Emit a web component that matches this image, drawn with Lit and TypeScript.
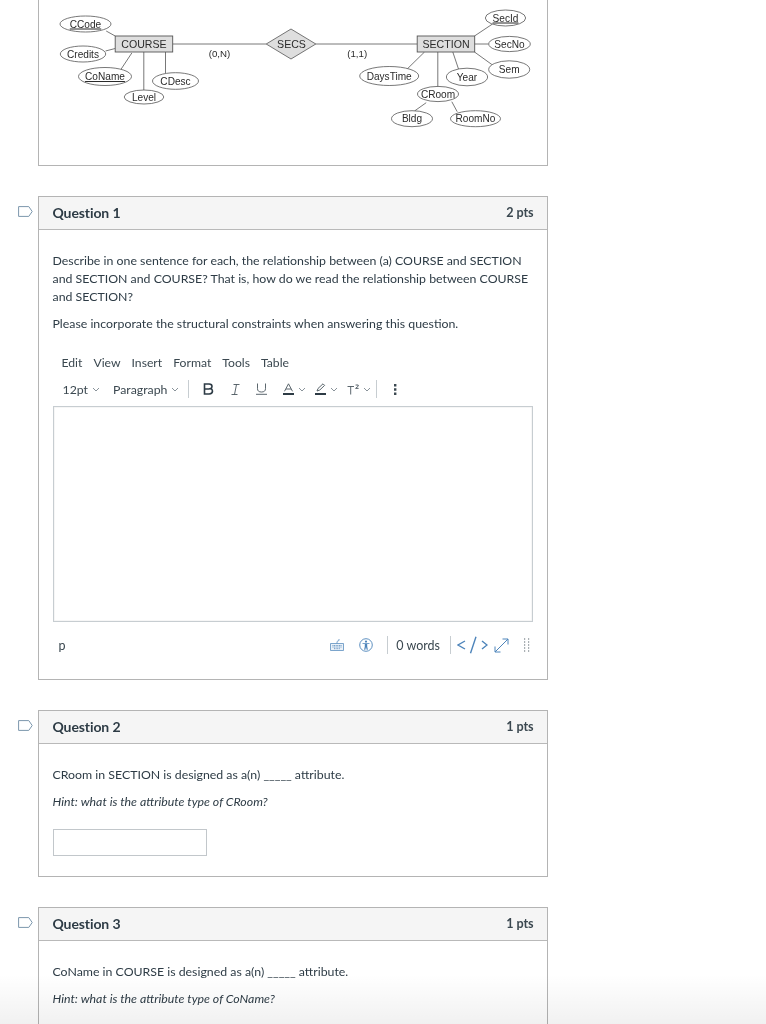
import { LitElement, html, css, svg } from "lit";
import { customElement } from "lit/decorators.js";

const ellipses: [string, number, number, number, number, boolean?][] = [
  ["CCode", 86, 24, 25.5, 8, true],
  ["Credits", 83.5, 54, 22.7, 8],
  ["CoName", 105.5, 76.5, 26.5, 9, true],
  ["CDesc", 176, 81, 23, 8.3],
  ["Level", 144.5, 97, 19.8, 7],
  ["SecId", 506, 18, 20.2, 8, true],
  ["SecNo", 510, 44, 20.8, 7.6],
  ["Sem", 509.7, 69.5, 20.5, 8.7],
  ["DaysTime", 389.7, 76, 29.5, 9.5],
  ["Year", 467.5, 77, 20.6, 8.8],
  ["CRoom", 438.5, 94, 20.5, 7.6],
  ["Bldg", 412.5, 118.7, 20.5, 8],
  ["RoomNo", 476, 118.7, 25, 8],
];
const lines: [number, number, number, number][] = [
  [106.7, 31, 115.7, 36],
  [106, 51, 115.7, 48.5],
  [121.7, 69, 132.3, 53],
  [144.3, 52, 144.3, 90],
  [166, 52, 166, 73],
  [173, 44, 266.7, 44],
  [316, 44, 417.7, 44],
  [475, 36, 493, 24],
  [475, 44, 489, 44],
  [475, 52, 493, 65],
  [425, 52, 407.7, 69],
  [438.3, 52, 438.3, 87],
  [453.3, 52, 459, 69],
  [426.7, 102.7, 415, 111],
  [452.3, 101.7, 457.7, 111.7],
];

const chevron = html`<svg class="chev" viewBox="0 0 8 5"><path d="M1 1l3 3 3-3" fill="none" stroke="#6b7780" stroke-width=".8"/></svg>`;
const flag = html`<svg class="flag" viewBox="0 0 15 11"><path d="M.6.6h10.200l3.400 4.900-3.400 4.900H.6z" fill="#fff" stroke="#7c97ad" stroke-width="1"/></svg>`;

@customElement("app-root")
export class AppRoot extends LitElement {
  static styles = css`
    :host {
      display: block;
      position: relative;
      height: 1024px;
      overflow: hidden;
      background: #fff;
      font-family: Lato, "Open Sans", sans-serif;
      color: #2d3b45;
      font-size: 12.33px;
    }
    .page { display: flex; flex-direction: column; padding-left: 18px; gap: 30px; filter: blur(.3px); }
    .row { display: flex; align-items: flex-start; }
    .gutter { width: 20px; flex: none; padding-top: 10px; box-sizing: border-box; height: 20px; }
    .flag { display: block; width: 15px; height: 11px; }
    .card { width: 510px; box-sizing: border-box; border: 1.5px solid #b4b4b4; background: #fff; }
    .figure { margin-left: 20px; border-top: 0; height: 165.5px; }
    .figure svg { display: block; width: 507px; height: 164px; }
    .head {
      height: 32px; display: flex; align-items: center; justify-content: space-between;
      padding: 0 13.5px; background: #f5f5f5; border-bottom: 1.5px solid #b9b9b9;
    }
    .title { font-size: 14px; font-weight: 700; color: #2d3b45; letter-spacing: -.1px; }
    .pts { font-size: 12.6px; font-weight: 700; color: #3b4850; letter-spacing: -.1px; }
    .body { padding: 22.5px 14px 0 13.5px; }
    p { margin: 0; line-height: 18px; font-size: 12.33px; }
    p + p { margin-top: 8.5px; }
    .hint { font-style: italic; }
    .q1 { height: 484px; }
    .q2 { height: 167px; }
    .q3 { height: 140px; }
    .menu { display: flex; gap: 11px; margin: 21px 0 0 9px; font-size: 12.2px; line-height: 18px; color: #3b4850; }
    .tools { display: flex; align-items: center; height: 18px; margin: 8.5px 0 0 10px; font-size: 12.3px; color: #3b4850; }
    .chev { width: 8px; height: 5px; margin-left: 4px; flex: none; }
    .sep { width: 1px; height: 18px; background: #c7cdd1; flex: none; }
    .tools svg.ic { flex: none; display: block; }
    .gap-b { margin-left: 14px; }
    .gap-i { margin-left: 17px; }
    .gap-u { margin-left: 16px; }
    .gap-a { margin-left: 16px; }
    .gap-p { margin-left: 9px; }
    .gap-t { margin-left: 9px; }
    .gap-s { margin-left: 5px; }
    .gap-d { margin-left: 17px; }
    .gap-para { margin-left: 13px; }
    .gap-sep1 { margin-left: 9px; }
    .editor { height: 216px; box-sizing: border-box; border: 1px solid #c7cdd1; margin-top: 8px; box-shadow: inset 0 0 0 .5px #eee; }
    .status { display: flex; align-items: center; height: 24px; margin: 11px 0 0 6px; font-size: 12.5px; color: #3b4850; }
    .spacer { flex: 1; }
    .status svg { display: block; flex: none; }
    .gap-a11y { margin-left: 15px; }
    .gap-sep2 { margin-left: 14px; }
    .gap-words { margin-left: 8px; }
    .gap-sep3 { margin-left: 10px; }
    .gap-code { margin-left: 6px; }
    .gap-exp { margin-left: 6px; }
    .gap-grip { margin-left: 15px; margin-right: 3px; }
    .input { width: 154px; height: 27px; box-sizing: border-box; border: 1px solid #c2c7cb; margin-top: 18px; background: #fff; }
    .shade {
      position: absolute; left: 0; right: 0; bottom: 0; height: 50px; pointer-events: none;
      background: linear-gradient(to bottom, rgba(0,0,0,0), rgba(0,0,0,.055));
    }
  `;

  private question(n: number, pts: number, cls: string, content: unknown) {
    return html`<div class="row">
      <div class="gutter">${flag}</div>
      <section class="card ${cls}">
        <div class="head"><span class="title">Question ${n}</span><span class="pts">${pts} pts</span></div>
        <div class="body">${content}</div>
      </section>
    </div>`;
  }

  private diagram() {
    return html`<svg viewBox="39.5 0 507 164" font-family="Liberation Sans, Arial, sans-serif" font-size="10" fill="#2b2b2b">
      ${lines.map(([a, b, c, d]) => svg`<line x1=${a} y1=${b} x2=${c} y2=${d} stroke="#555" stroke-width=".8"/>`)}
      <rect x="115.7" y="36" width="57.5" height="16" fill="#dedede" stroke="#555" stroke-width=".9"/>
      <text x="144.5" y="47.8" text-anchor="middle" font-size="10.6">COURSE</text>
      <rect x="417.7" y="36" width="57.5" height="16" fill="#dedede" stroke="#555" stroke-width=".9"/>
      <text x="446.5" y="47.8" text-anchor="middle" font-size="10.6">SECTION</text>
      <path d="M266.7 44l24.8-15 24.8 15-24.8 15z" fill="#dedede" stroke="#555" stroke-width=".8"/>
      <text x="292" y="47.8" text-anchor="middle" font-size="10.6">SECS</text>
      <text x="220" y="56.5" text-anchor="middle" font-size="9.7">(0,N)</text>
      <text x="357.7" y="56.5" text-anchor="middle" font-size="9.7">(1,1)</text>
      ${ellipses.map(([t, x, y, rx, ry, key]) => svg`
        <ellipse cx=${x} cy=${y} rx=${rx} ry=${ry} fill="#fff" stroke="#555" stroke-width=".8"/>
        <text x=${x} y=${y + 3.5} text-anchor="middle" font-size="10.1" text-decoration=${key ? "underline" : "none"}>${t}</text>`)}
    </svg>`;
  }

  private toolbar() {
    return html`<div class="tools">
      <span>12pt</span>${chevron}
      <span class="gap-para">Paragraph</span>${chevron}
      <span class="sep gap-sep1"></span>
      <svg class="ic gap-b" width="11" height="12" viewBox="0 0 11 12"><path d="M1.500 1h4.600c1.800 0 2.900.9 2.900 2.400 0 1.100-.6 1.900-1.600 2.200 1.300.3 2.100 1.200 2.100 2.500 0 1.800-1.300 2.900-3.300 2.900H1.500zM1.500 6h5" fill="none" stroke="#2d3b45" stroke-width="1.600"/></svg>
      <svg class="ic gap-i" width="9" height="11" viewBox="0 0 9 11"><path d="M2.500.5h6M.5 10.500h6M5.500.5l-2 10" fill="none" stroke="#4a565e" stroke-width=".9"/></svg>
      <svg class="ic gap-u" width="11" height="12" viewBox="0 0 11 12"><path d="M1.500.5v5.200c0 2.200 1.400 3.300 4 3.300s4-1.100 4-3.300V.5M0 11.300h11" fill="none" stroke="#4a565e" stroke-width=".9"/></svg>
      <svg class="ic gap-a" width="11" height="12" viewBox="0 0 11 12"><path d="M1.500 8.300L5.500.8l4 7.500M3 6h5" fill="none" stroke="#4a565e" stroke-width=".9"/><path d="M0 10h11v2H0z" fill="#2d3b45"/></svg>${chevron}
      <svg class="ic gap-p" width="11" height="12" viewBox="0 0 11 12"><path d="M2 8l1-2.500L8 .8l1.600 1.600L4.800 7z" fill="none" stroke="#4a565e" stroke-width=".9"/><path d="M0 10h11v2H0z" fill="#2d3b45"/></svg>${chevron}
      <svg class="ic gap-t" width="12" height="11" viewBox="0 0 12 11"><path d="M.5 2.500h6.500M3.700 2.500v8M8.600 1h2.600v1.200L8.600 4.400h3" fill="none" stroke="#4a565e" stroke-width=".9"/></svg>${chevron}
      <span class="sep gap-s"></span>
      <svg class="ic gap-d" width="3" height="11" viewBox="0 0 3 11"><path d="M0 0h2.400v2.400H0zM0 4.300h2.400v2.400H0zM0 8.600h2.400V11H0z" fill="#3b4850"/></svg>
    </div>`;
  }

  private statusbar() {
    return html`<div class="status">
      <span>p</span>
      <span class="spacer"></span>
      <svg width="14" height="12" viewBox="0 0 14 12"><path d="M.5 4.500h13v7H.5zM7 4.500V3c0-1 1-1 2-1.500V0" fill="#eaf1f8" stroke="#5d8fc0" stroke-width=".8"/><path d="M2.500 6.500h9M2.500 8h9M4 9.700h6" stroke="#5d8fc0" stroke-width=".9" stroke-dasharray="1 .6"/></svg>
      <svg class="gap-a11y" width="14" height="14" viewBox="0 0 14 14"><circle cx="7" cy="7" r="6.300" fill="none" stroke="#4d84ba" stroke-width=".9"/><circle cx="7" cy="3.600" r="1.100" fill="#4d84ba"/><path d="M3.500 5.200h7v.9H8.200v2.300l.7 3.300H7.700L7 8.900l-.7 2.800H5.100l.7-3.300V6.100H3.500z" fill="#4d84ba"/></svg>
      <span class="sep gap-sep2"></span>
      <span class="gap-words">0 words</span>
      <span class="sep gap-sep3"></span>
      <svg class="gap-code" width="31" height="18" viewBox="0 0 31 18"><path d="M8 5L1 9l7 4M19 .8l-5.500 16.400M25 5l5 4-5 4" fill="none" stroke="#4d84ba" stroke-width="1.400"/></svg>
      <svg class="gap-exp" width="15" height="15" viewBox="0 0 15 15"><path d="M1 14L14 1M8.500 1H14v5.500M1 8.500V14h5.500" fill="none" stroke="#4d84ba" stroke-width="1"/></svg>
      <svg class="gap-grip" width="6" height="14" viewBox="0 0 6 14"><path d="M0 1h1.200M4 1h1.200M0 4h1.200M4 4h1.200M0 7h1.200M4 7h1.200M0 10h1.200M4 10h1.200M0 13h1.200M4 13h1.200" stroke="#56626a" stroke-width="1.200"/></svg>
    </div>`;
  }

  render() {
    return html`<div class="page">
        <div class="card figure">${this.diagram()}</div>
        ${this.question(1, 2, "q1", html`
          <p>Describe in one sentence for each, the relationship between (a) COURSE and SECTION and SECTION and COURSE? That is, how do we read the relationship between COURSE and SECTION?</p>
          <p>Please incorporate the structural constraints when answering this question.</p>
          <div class="menu"><span>Edit</span><span>View</span><span>Insert</span><span>Format</span><span>Tools</span><span>Table</span></div>
          ${this.toolbar()}
          <div class="editor"></div>
          ${this.statusbar()}
        `)}
        ${this.question(2, 1, "q2", html`
          <p>CRoom in SECTION is designed as a(n) _____ attribute.</p>
          <p class="hint">Hint: what is the attribute type of CRoom?</p>
          <div class="input"></div>
        `)}
        ${this.question(3, 1, "q3", html`
          <p>CoName in COURSE is designed as a(n) _____ attribute.</p>
          <p class="hint">Hint: what is the attribute type of CoName?</p>
        `)}
      </div>
      <div class="shade"></div>`;
  }
}
